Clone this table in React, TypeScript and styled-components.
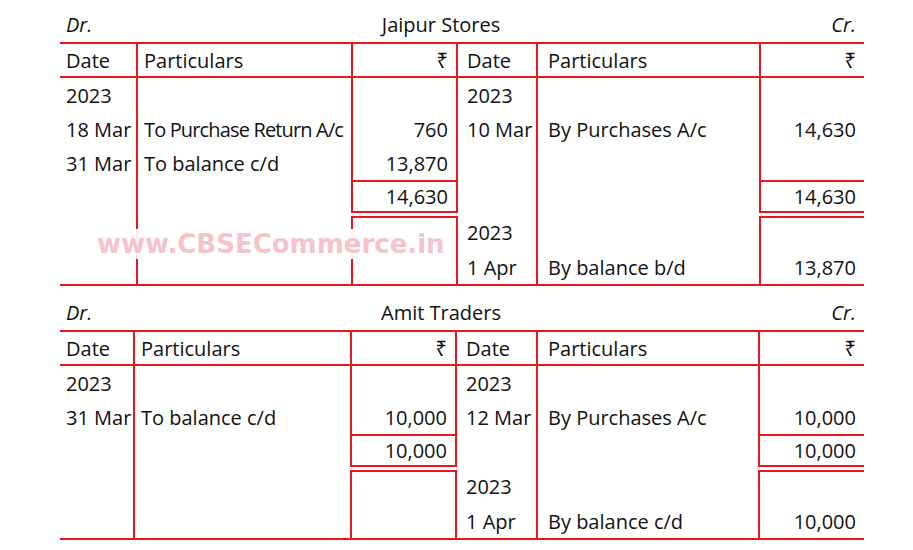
import styled, { createGlobalStyle } from "styled-components";

const RED = "#e8161d";

const GlobalStyle = createGlobalStyle`
  html, body {
    margin: 0;
    padding: 0;
    background: #fff;
  }
  body {
    font-family: "Open Sans", "Noto Sans", sans-serif;
    color: #111;
  }
`;

type Entry = { date?: string; text?: string; amount?: string; tight?: boolean };
type Row = { left: Entry; right: Entry; total?: boolean };

const jaipur: Row[] = [
  { left: { date: "2023" }, right: { date: "2023" } },
  {
    left: { date: "18 Mar", text: "To Purchase Return A/c", amount: "760", tight: true },
    right: { date: "10 Mar", text: "By Purchases A/c", amount: "14,630" },
  },
  { left: { date: "31 Mar", text: "To balance c/d", amount: "13,870" }, right: {} },
  { total: true, left: { amount: "14,630" }, right: { amount: "14,630" } },
  { left: {}, right: { date: "2023" } },
  { left: {}, right: { date: "1 Apr", text: "By balance b/d", amount: "13,870" } },
];

const amit: Row[] = [
  { left: { date: "2023" }, right: { date: "2023" } },
  {
    left: { date: "31 Mar", text: "To balance c/d", amount: "10,000" },
    right: { date: "12 Mar", text: "By Purchases A/c", amount: "10,000" },
  },
  { total: true, left: { amount: "10,000" }, right: { amount: "10,000" } },
  { left: {}, right: { date: "2023" } },
  { left: {}, right: { date: "1 Apr", text: "By balance c/d", amount: "10,000" } },
];

const Page = styled.div`
  display: flex;
  flex-direction: column;
  gap: 9px;
  width: 804px;
  padding: 7px 0 0 60px;
`;

const Section = styled.section`
  position: relative;
`;

const TitleRow = styled.div`
  display: grid;
  grid-template-columns: 1fr auto 1fr;
  align-items: center;
  height: 35px;
  font-size: 20px;
`;

const Side = styled.span<{ $right?: boolean }>`
  font-style: italic;
  padding: 0 8px 0 6px;
  text-align: ${(p) => (p.$right ? "right" : "left")};
`;

const Title = styled.span`
  margin-right: 42px;
`;

const Table = styled.table`
  width: 100%;
  table-layout: fixed;
  border-collapse: collapse;
  border-top: 2px solid ${RED};
  border-bottom: 2px solid ${RED};
  font-size: 20px;
`;

const Col = styled.col<{ $w: number }>`
  width: ${(p) => p.$w}px;
`;

const Head = styled.th<{ $amount?: boolean; $pl: number }>`
  height: 32px;
  padding: 0 8px 0 ${(p) => p.$pl}px;
  font-weight: 400;
  text-align: ${(p) => (p.$amount ? "right" : "left")};
  border-bottom: 2px solid ${RED};
  border-right: 2px solid ${RED};
  &:last-child {
    border-right: none;
  }
`;

const Cell = styled.td<{ $amount?: boolean; $pl?: number; $h: number; $ruled?: boolean; $tight?: boolean }>`
  height: ${(p) => p.$h}px;
  padding: 0 8px 0 ${(p) => p.$pl ?? 7}px;
  white-space: nowrap;
  text-align: ${(p) => (p.$amount ? "right" : "left")};
  letter-spacing: ${(p) => (p.$tight ? "-0.85px" : "0")};
  border-right: 2px solid ${RED};
  &:last-child {
    border-right: none;
  }
  ${(p) => (p.$ruled ? `border-top: 2px solid ${RED}; border-bottom: 7px double ${RED};` : "")}
`;

const Watermark = styled.div`
  position: absolute;
  left: 33px;
  top: 222px;
  padding: 0 4px;
  line-height: 30px;
  background: rgba(255, 255, 255, 0.92);
  color: #f5c4c9;
  font-family: "DejaVu Sans", sans-serif;
  font-weight: 700;
  font-size: 26px;
`;

function Ledger({
  title,
  rows,
  widths,
  watermark,
}: {
  title: string;
  rows: Row[];
  widths: number[];
  watermark?: boolean;
}) {
  const totalAt = rows.findIndex((r) => r.total);
  return (
    <Section>
      <TitleRow>
        <Side>Dr.</Side>
        <Title>{title}</Title>
        <Side $right>Cr.</Side>
      </TitleRow>
      <Table>
        <colgroup>
          {widths.map((w, i) => (
            <Col key={i} $w={w} />
          ))}
        </colgroup>
        <thead>
          <tr>
            <Head $pl={6}>Date</Head>
            <Head $pl={6}>Particulars</Head>
            <Head $pl={6} $amount>₹</Head>
            <Head $pl={9}>Date</Head>
            <Head $pl={10}>Particulars</Head>
            <Head $pl={6} $amount>₹</Head>
          </tr>
        </thead>
        <tbody>
          {rows.map((r, i) => {
            const h = r.total ? 29 : i > totalAt ? 33 : 34;
            return (
              <tr key={i}>
                <Cell $h={h} $pl={6}>{r.left.date}</Cell>
                <Cell $h={h} $pl={6} $tight={r.left.tight}>{r.left.text}</Cell>
                <Cell $h={h} $amount $ruled={r.total}>{r.left.amount}</Cell>
                <Cell $h={h} $pl={9}>{r.right.date}</Cell>
                <Cell $h={h} $pl={10}>{r.right.text}</Cell>
                <Cell $h={h} $amount $ruled={r.total}>{r.right.amount}</Cell>
              </tr>
            );
          })}
        </tbody>
      </Table>
      {watermark && <Watermark>www.CBSECommerce.in</Watermark>}
    </Section>
  );
}

export default function App() {
  return (
    <>
      <GlobalStyle />
      <Page>
        <Ledger title="Jaipur Stores" rows={jaipur} widths={[77, 215, 105, 80, 223, 104]} watermark />
        <Ledger title="Amit Traders" rows={amit} widths={[74, 217, 105, 81, 222, 105]} />
      </Page>
    </>
  );
}
